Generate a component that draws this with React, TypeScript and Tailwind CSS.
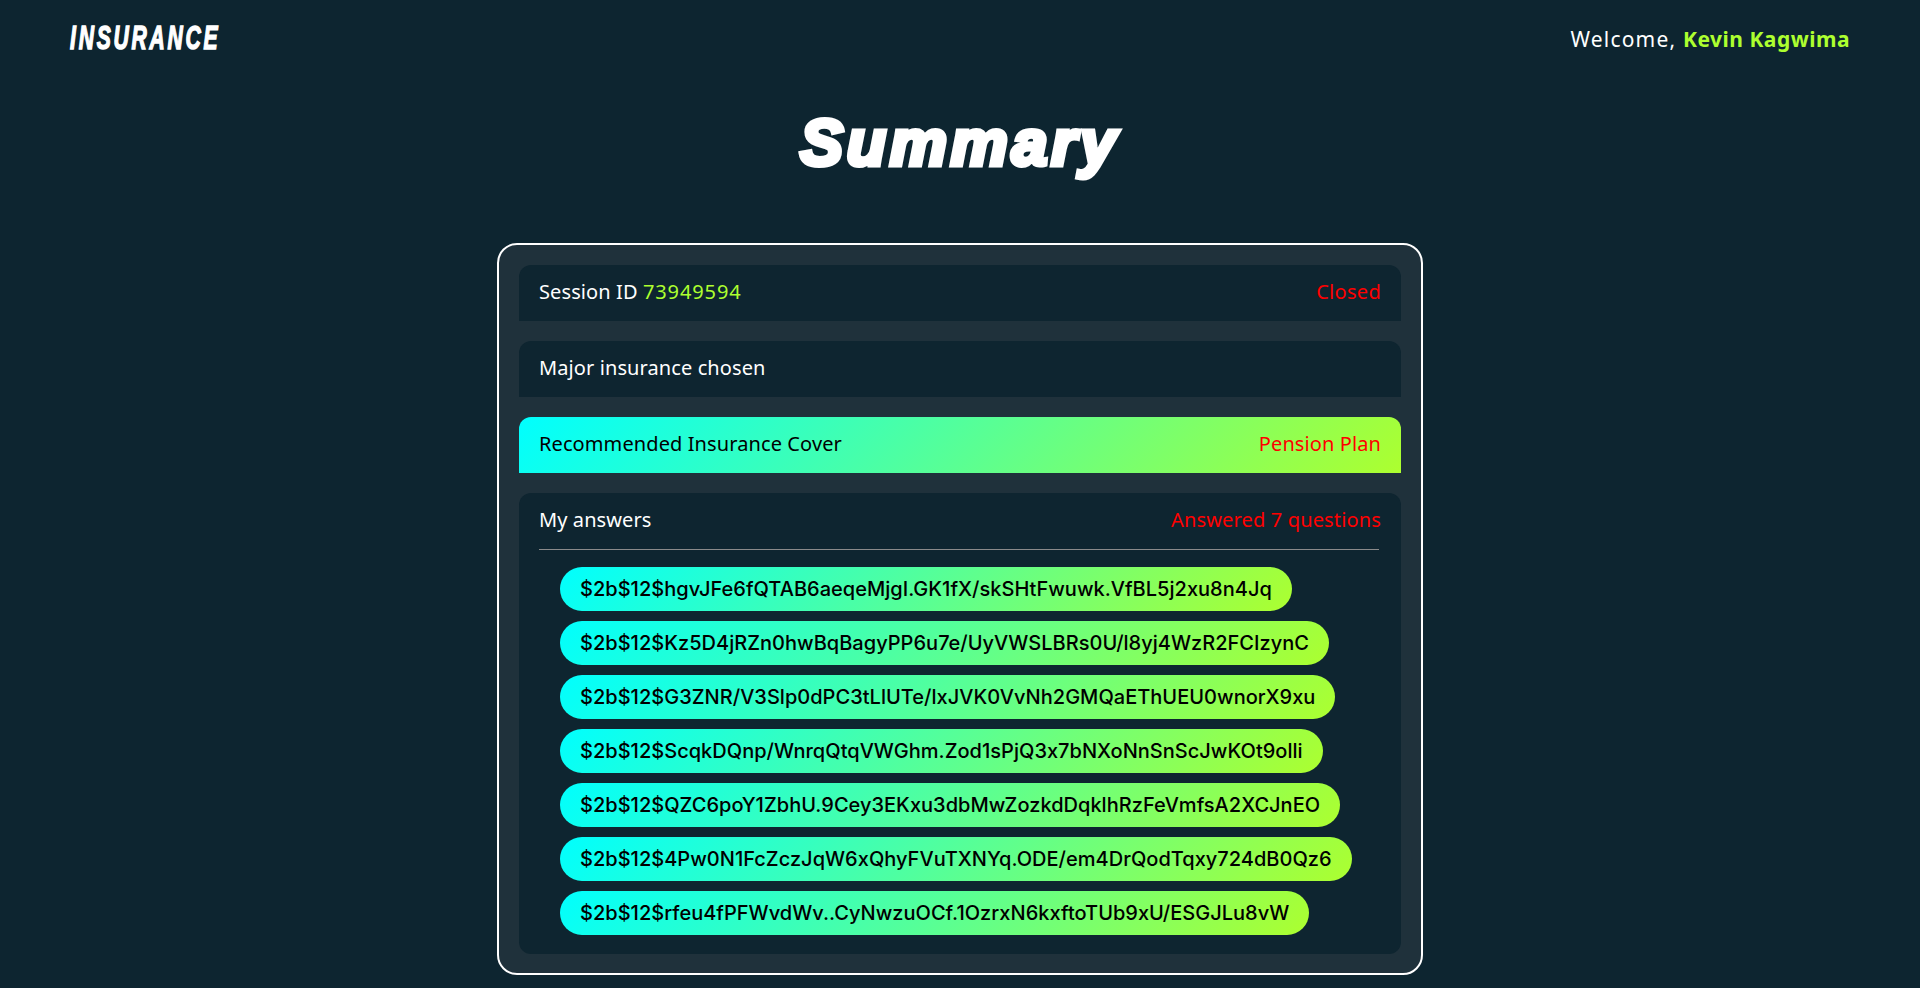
const answers = [
  "$2b$12$hgvJFe6fQTAB6aeqeMjgI.GK1fX/skSHtFwuwk.VfBL5j2xu8n4Jq",
  "$2b$12$Kz5D4jRZn0hwBqBagyPP6u7e/UyVWSLBRs0U/l8yj4WzR2FCIzynC",
  "$2b$12$G3ZNR/V3Slp0dPC3tLlUTe/lxJVK0VvNh2GMQaEThUEU0wnorX9xu",
  "$2b$12$ScqkDQnp/WnrqQtqVWGhm.Zod1sPjQ3x7bNXoNnSnScJwKOt9olli",
  "$2b$12$QZC6poY1ZbhU.9Cey3EKxu3dbMwZozkdDqklhRzFeVmfsA2XCJnEO",
  "$2b$12$4Pw0N1FcZczJqW6xQhyFVuTXNYq.ODE/em4DrQodTqxy724dB0Qz6",
  "$2b$12$rfeu4fPFWvdWv..CyNwzuOCf.1OzrxN6kxftoTUb9xU/ESGJLu8vW",
];

export default function App() {
  return (
    <div className="min-h-[988px] overflow-hidden bg-[#0d2530] text-white font-['Noto_Sans',sans-serif]">
      <header className="flex h-[76px] items-center justify-between pl-[70px] pr-[70px]">
        <div className="mb-0.5 w-[150px] origin-left scale-x-[0.62] whitespace-nowrap text-[34px] font-bold italic leading-none tracking-[4.5px] font-['Liberation_Sans',sans-serif] [-webkit-text-stroke:1.5px_white]">
          INSURANCE
        </div>
        <div className="mt-1 text-[21px] tracking-[1.2px]">
          Welcome, <span className="font-bold tracking-[0.5px] text-[#adff2f]">Kevin Kagwima</span>
        </div>
      </header>
      <h1 className="mt-[32px] text-center text-[64px] font-black italic leading-[70px] tracking-[4px] font-['Liberation_Sans',sans-serif] [-webkit-text-stroke:5px_white]">
        Summary
      </h1>
      <div className="mx-auto mt-[65px] flex w-[926px] flex-col gap-5 rounded-[20px] border-2 border-white bg-[#1f313b] p-5 pb-[19px] text-[20px] leading-[26px] tracking-[0.1px]">
        <div className="flex h-14 items-center justify-between rounded-t-xl bg-[#0e2530] px-5 pb-0.5">
          <span>Session ID <span className="tracking-[0.9px] text-[#adff2f]">73949594</span></span>
          <span className="tracking-[0.3px] text-[#ff0000]">Closed</span>
        </div>
        <div className="flex h-14 items-center rounded-t-xl bg-[#0e2530] px-5 pb-0.5">Major insurance chosen</div>
        <div className="flex h-14 items-center justify-between rounded-t-xl bg-[linear-gradient(135deg,#00ffff,#adff2f)] px-5 pb-0.5 text-black">
          <span>Recommended Insurance Cover</span>
          <span className="text-[#ff0000]">Pension Plan</span>
        </div>
        <div className="rounded-xl bg-[#0e2530] px-5 pb-[19px]">
          <div className="mr-0.5 flex h-[57px] items-center justify-between border-b border-[#8a8a8a] pb-0.5">
            <span>My answers</span>
            <span className="-mr-0.5 tracking-[0.15px] text-[#ff0000]">Answered 7 questions</span>
          </div>
          <div className="mt-[17px] flex flex-col items-start gap-2.5 pl-[21px]">
            {answers.map((a) => (
              <div key={a} className="flex h-11 items-center rounded-full bg-[linear-gradient(135deg,#00ffff,#adff2f)] px-5 font-['Inter',sans-serif] text-[20px] font-medium tracking-[0.02px] text-black [font-variant-ligatures:no-contextual]">
                {a}
              </div>
            ))}
          </div>
        </div>
      </div>
    </div>
  );
}
